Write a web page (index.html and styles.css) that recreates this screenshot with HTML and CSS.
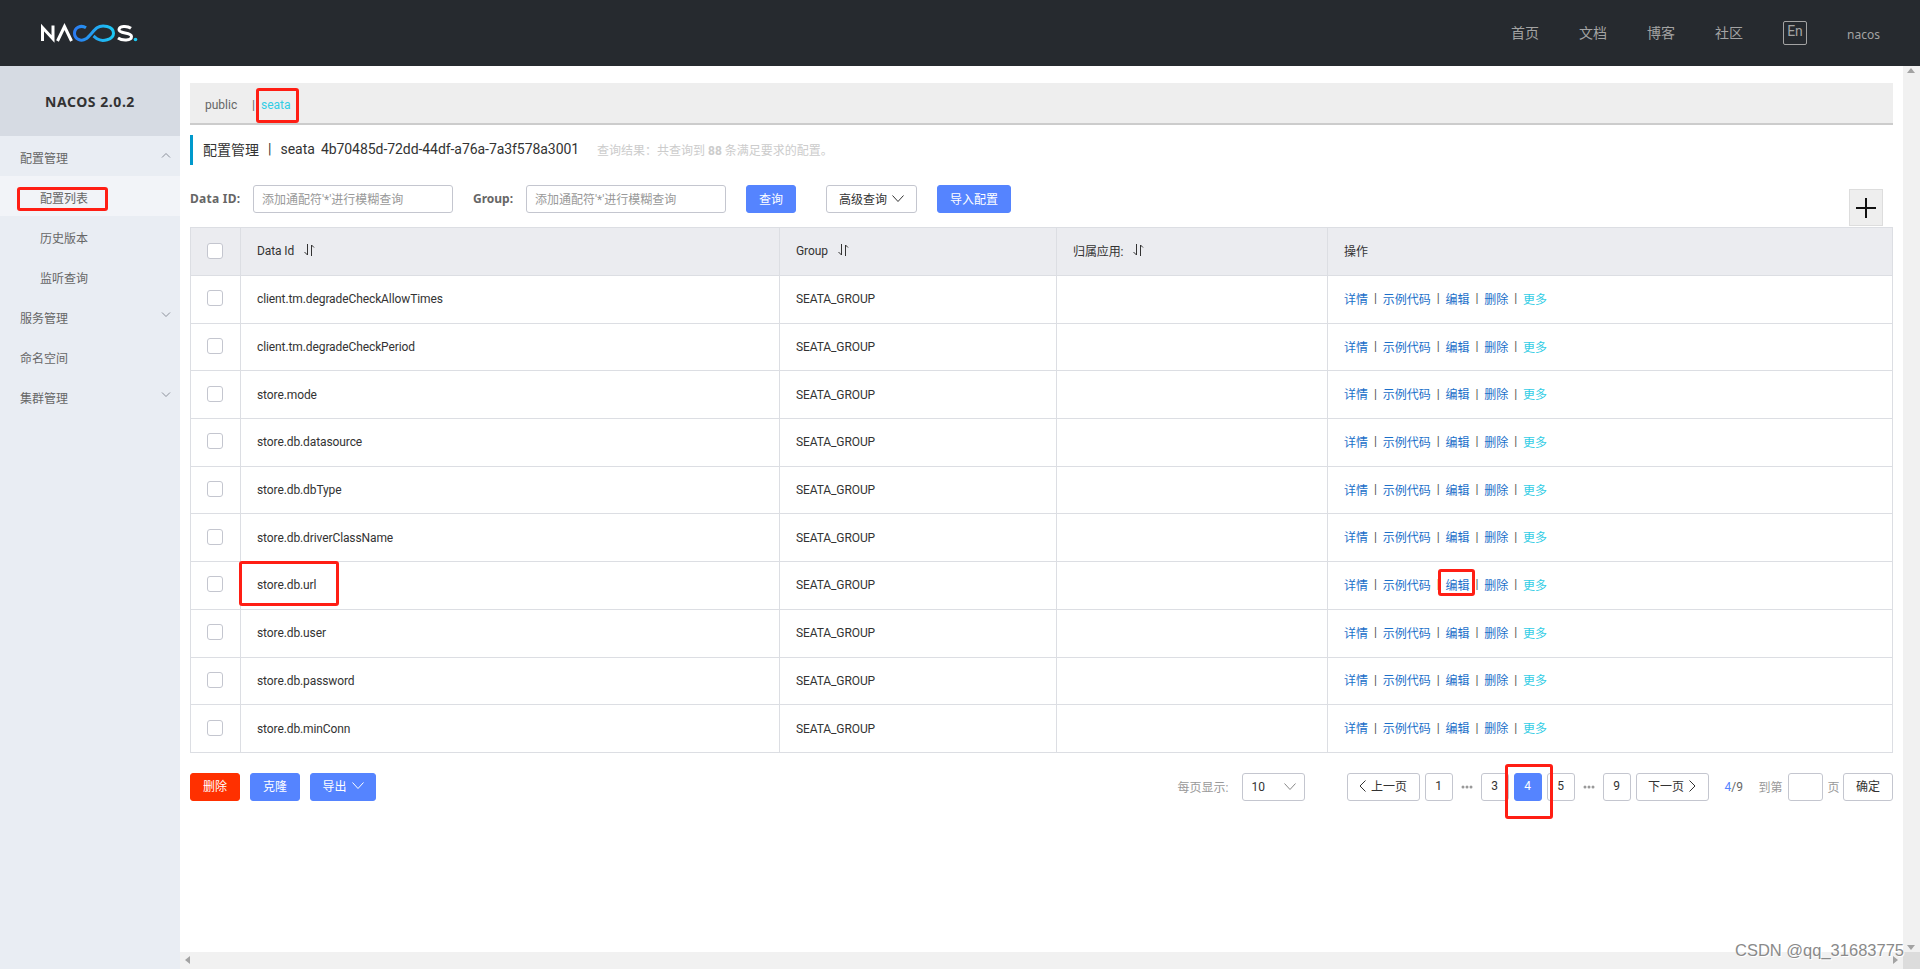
FILE: index.html
```html
<!DOCTYPE html>
<html lang="zh-CN">
<head>
<meta charset="utf-8">
<title>Nacos</title>
<link rel="stylesheet" href="styles.css">
</head>
<body>
<header class="topbar">
  <svg class="logo" viewBox="0 0 100 20" width="100" height="20" role="img" aria-label="NACOS">
    <defs><linearGradient id="lg" x1="0" x2="1" y1="0" y2="0"><stop offset="0" stop-color="#2a7bf0"/><stop offset="1" stop-color="#1cc9f4"/></linearGradient></defs>
    <path d="M3.5 18V4.5L14 16V2.5" fill="none" stroke="#fff" stroke-width="3"/>
    <path d="M18.5 18L25.5 3.5L32.5 18" fill="none" stroke="#fff" stroke-width="3"/>
    <path d="M47 4.8C42 1.5 35.5 4.5 35.5 10.3C35.5 16 42 19 47 15.8C50 14 55 6.8 58 4.8C63 1.5 74.5 3 74.5 10.3C74.5 17 63 19 58 15.8L54.5 13" fill="none" stroke="url(#lg)" stroke-width="3"/>
    <path d="M92 5.2C88 2.5 80 2.8 80 6.8C80 11 92.5 9 92.5 13.5C92.5 18 83 17.8 79 15" fill="none" stroke="#fff" stroke-width="3"/>
    <circle cx="96.5" cy="16.5" r="1.8" fill="#1cc9f4"/>
  </svg>
  <nav class="topnav">
    <a class="topnav-item">首页</a><a class="topnav-item">文档</a><a class="topnav-item">博客</a><a class="topnav-item">社区</a>
    <span class="lang">En</span>
    <span class="user">nacos</span>
  </nav>
</header>
<div class="body-wrap">
  <aside class="sidebar">
    <div class="brand">NACOS 2.0.2</div>
    <div class="menu-item">配置管理<svg class="chev" viewBox="0 0 10 6" width="10" height="6"><path d="M1 5.5L5 1.5L9 5.5"/></svg></div>
    <div class="menu-item sub active">配置列表</div>
    <div class="menu-item sub">历史版本</div>
    <div class="menu-item sub">监听查询</div>
    <div class="menu-item">服务管理<svg class="chev" viewBox="0 0 10 6" width="10" height="6"><path d="M1 .5L5 4.5L9 .5"/></svg></div>
    <div class="menu-item">命名空间</div>
    <div class="menu-item">集群管理<svg class="chev" viewBox="0 0 10 6" width="10" height="6"><path d="M1 .5L5 4.5L9 .5"/></svg></div>
  </aside>
  <div class="main-col">
    <div class="main-row">
      <main class="content">
        <div class="ns-bar"><span class="ns ns-first">public</span><span class="ns-sep">|</span><span class="ns ns-on">seata</span></div>
        <div class="title"><span class="title-main">配置管理</span><span class="title-pipe">|</span><span class="title-main">seata</span><span class="title-id">4b70485d-72dd-44df-a76a-7a3f578a3001</span><span class="title-info">查询结果：共查询到 <b>88</b> 条满足要求的配置。</span></div>
        <div class="filters">
          <label class="f-label f-label-id">Data ID:</label>
          <input class="f-input" placeholder="添加通配符'*'进行模糊查询">
          <label class="f-label f-label-group">Group:</label>
          <input class="f-input" placeholder="添加通配符'*'进行模糊查询">
          <button class="btn primary btn-query">查询</button>
          <button class="btn btn-adv">高级查询<svg class="caret" viewBox="0 0 12 7" width="12" height="7"><path d="M.5 .5L6 6.5L11.5 .5"/></svg></button>
          <button class="btn primary btn-import">导入配置</button>
          <button class="plus" aria-label="新建"><svg viewBox="0 0 20 20" width="20" height="20"><path d="M0 10H20M10 0V20"/></svg></button>
        </div>
        <div class="table">
          <div class="row head">
            <div class="cell check"><span class="box"></span></div>
            <div class="cell">Data Id<svg class="sort" viewBox="0 0 11 12" width="11" height="12"><path d="M3.5 0V11L.5 8M7.5 12V1L10 3.5"/></svg></div>
            <div class="cell">Group<svg class="sort" viewBox="0 0 11 12" width="11" height="12"><path d="M3.5 0V11L.5 8M7.5 12V1L10 3.5"/></svg></div>
            <div class="cell">归属应用:<svg class="sort" viewBox="0 0 11 12" width="11" height="12"><path d="M3.5 0V11L.5 8M7.5 12V1L10 3.5"/></svg></div>
            <div class="cell">操作</div>
          </div>
          <div class="row"><div class="cell check"><span class="box"></span></div><div class="cell">client.tm.degradeCheckAllowTimes</div><div class="cell">SEATA_GROUP</div><div class="cell"></div><div class="cell ops"><a>详情</a><i>|</i><a>示例代码</a><i>|</i><a>编辑</a><i>|</i><a>删除</a><i>|</i><a class="more">更多</a></div></div>
          <div class="row"><div class="cell check"><span class="box"></span></div><div class="cell">client.tm.degradeCheckPeriod</div><div class="cell">SEATA_GROUP</div><div class="cell"></div><div class="cell ops"><a>详情</a><i>|</i><a>示例代码</a><i>|</i><a>编辑</a><i>|</i><a>删除</a><i>|</i><a class="more">更多</a></div></div>
          <div class="row"><div class="cell check"><span class="box"></span></div><div class="cell">store.mode</div><div class="cell">SEATA_GROUP</div><div class="cell"></div><div class="cell ops"><a>详情</a><i>|</i><a>示例代码</a><i>|</i><a>编辑</a><i>|</i><a>删除</a><i>|</i><a class="more">更多</a></div></div>
          <div class="row"><div class="cell check"><span class="box"></span></div><div class="cell">store.db.datasource</div><div class="cell">SEATA_GROUP</div><div class="cell"></div><div class="cell ops"><a>详情</a><i>|</i><a>示例代码</a><i>|</i><a>编辑</a><i>|</i><a>删除</a><i>|</i><a class="more">更多</a></div></div>
          <div class="row"><div class="cell check"><span class="box"></span></div><div class="cell">store.db.dbType</div><div class="cell">SEATA_GROUP</div><div class="cell"></div><div class="cell ops"><a>详情</a><i>|</i><a>示例代码</a><i>|</i><a>编辑</a><i>|</i><a>删除</a><i>|</i><a class="more">更多</a></div></div>
          <div class="row"><div class="cell check"><span class="box"></span></div><div class="cell">store.db.driverClassName</div><div class="cell">SEATA_GROUP</div><div class="cell"></div><div class="cell ops"><a>详情</a><i>|</i><a>示例代码</a><i>|</i><a>编辑</a><i>|</i><a>删除</a><i>|</i><a class="more">更多</a></div></div>
          <div class="row"><div class="cell check"><span class="box"></span></div><div class="cell">store.db.url</div><div class="cell">SEATA_GROUP</div><div class="cell"></div><div class="cell ops"><a>详情</a><i>|</i><a>示例代码</a><i>|</i><a>编辑</a><i>|</i><a>删除</a><i>|</i><a class="more">更多</a></div></div>
          <div class="row"><div class="cell check"><span class="box"></span></div><div class="cell">store.db.user</div><div class="cell">SEATA_GROUP</div><div class="cell"></div><div class="cell ops"><a>详情</a><i>|</i><a>示例代码</a><i>|</i><a>编辑</a><i>|</i><a>删除</a><i>|</i><a class="more">更多</a></div></div>
          <div class="row"><div class="cell check"><span class="box"></span></div><div class="cell">store.db.password</div><div class="cell">SEATA_GROUP</div><div class="cell"></div><div class="cell ops"><a>详情</a><i>|</i><a>示例代码</a><i>|</i><a>编辑</a><i>|</i><a>删除</a><i>|</i><a class="more">更多</a></div></div>
          <div class="row"><div class="cell check"><span class="box"></span></div><div class="cell">store.db.minConn</div><div class="cell">SEATA_GROUP</div><div class="cell"></div><div class="cell ops"><a>详情</a><i>|</i><a>示例代码</a><i>|</i><a>编辑</a><i>|</i><a>删除</a><i>|</i><a class="more">更多</a></div></div>
        </div>
        <div class="footer">
          <button class="btn danger btn-s">删除</button>
          <button class="btn primary btn-s">克隆</button>
          <button class="btn primary btn-export">导出<svg class="caret" viewBox="0 0 12 7" width="12" height="7"><path d="M.5 .5L6 6.5L11.5 .5"/></svg></button>
          <span class="pg-label">每页显示:</span>
          <div class="pg-select">10<svg class="caret" viewBox="0 0 12 7" width="12" height="7"><path d="M.5 .5L6 6.5L11.5 .5"/></svg></div>
          <div class="pager">
            <button class="btn pg-nav"><svg class="pg-arrow" viewBox="0 0 7 12" width="7" height="12"><path d="M6.5 .5L1 6L6.5 11.5"/></svg>上一页</button>
            <button class="btn pg">1</button><svg class="dots" viewBox="0 0 12 4" width="12" height="4"><circle cx="2" cy="2" r="1.5"/><circle cx="6" cy="2" r="1.5"/><circle cx="10" cy="2" r="1.5"/></svg><button class="btn pg">3</button><button class="btn pg primary">4</button><button class="btn pg">5</button><svg class="dots" viewBox="0 0 12 4" width="12" height="4"><circle cx="2" cy="2" r="1.5"/><circle cx="6" cy="2" r="1.5"/><circle cx="10" cy="2" r="1.5"/></svg><button class="btn pg">9</button>
            <button class="btn pg-nav">下一页<svg class="pg-arrow" viewBox="0 0 7 12" width="7" height="12"><path d="M.5 .5L6 6L.5 11.5"/></svg></button>
          </div>
          <span class="pg-count"><em>4</em>/9</span>
          <span class="pg-to">到第</span>
          <input class="pg-input">
          <span class="pg-unit">页</span>
          <button class="btn pg-ok">确定</button>
        </div>
      </main>
      <div class="vbar"><span class="arrow up"></span><span class="arrow down"></span></div>
    </div>
    <div class="hbar"><span class="arrow left"></span><span class="arrow right"></span><span class="corner"></span></div>
  </div>
</div>
<span class="mark mark-seata"></span>
<span class="mark mark-list"></span>
<span class="mark mark-url"></span>
<span class="mark mark-edit"></span>
<span class="mark mark-page"></span>
<span class="watermark">CSDN @qq_31683775</span>
</body>
</html>
```
FILE: styles.css
```css
* { box-sizing: border-box; }
html, body { margin: 0; height: 100%; overflow: hidden; }
body {
  font-family: Roboto, "Noto Sans CJK SC", sans-serif;
  font-size: 12px;
  color: #333;
  background: #fff;
  display: flex;
  flex-direction: column;
  height: 969px;
}
button, input { font-family: inherit; font-size: 12px; }

/* header */
.topbar {
  height: 66px;
  flex: none;
  background: #262a2f;
  display: flex;
  align-items: center;
  padding-left: 39px;
  padding-right: 39px;
  justify-content: space-between;
}
.logo { display: block; margin-top: -1px; }
.topnav { display: flex; align-items: center; color: #a3a3a3; font-size: 14px; }
.topnav-item { width: 28px; margin-right: 40px; white-space: nowrap; line-height: 20px; }
.lang {
  width: 24px; height: 24px; margin-right: 1px;
  border: 1px solid #a3a3a3; border-radius: 2px;
  display: flex; justify-content: center; align-items: flex-start;
  line-height: 19px;
  font-size: 14px;
}
.user { margin-left: 39px; width: 34px; font-size: 12px; margin-top: 2px; font-family: "Noto Sans", sans-serif; }

.body-wrap { flex: 1; display: flex; min-height: 0; }

/* sidebar */
.sidebar { width: 180px; flex: none; background: #e9edf3; color: #666; }
.brand {
  height: 70px; background: #d6dbe3; color: #333;
  font-family: "Noto Sans", sans-serif;
  font-weight: 700; font-size: 14px; letter-spacing: .55px;
  display: flex; align-items: center; justify-content: center;
}
.menu-item {
  height: 40px; padding-left: 20px; padding-top: 3px;
  display: flex; align-items: center; position: relative;
}
.menu-item.sub { padding-left: 40px; }
.menu-item.active { background: #f2f4f8; }
.chev { position: absolute; right: 9px; top: 16px; fill: none; stroke: #8a8f99; stroke-width: 1; }

/* main */
.main-col { flex: 1; min-width: 0; display: flex; flex-direction: column; }
.main-row { flex: 1; min-height: 0; display: flex; }
.content { flex: 1; min-width: 0; padding: 17px 10px 0; }

.ns-bar {
  height: 42px; background: #eee; border-bottom: 2px solid #ccc;
  padding-left: 15px; padding-top: 4px; display: flex; align-items: center; color: #666;
}
.ns-first { width: 32px; }
.ns-sep { margin-left: 15px; margin-right: 6px; }
.ns-on { color: #33cde5; }

.title {
  margin-top: 10px; height: 30px; padding-bottom: 2px;
  border-left: 3px solid #09c;
  padding-left: 10px;
  display: flex; align-items: center;
  font-size: 14px; color: #333; white-space: nowrap;
}
.title-pipe { margin: 0 9px; }
.title-id { margin-left: 6px; letter-spacing: -.06px; }
.title-info { margin-left: 18px; font-size: 12px; color: #ccc; }
.title-info b { font-weight: 700; }

.filters { margin-top: 20px; height: 42px; display: flex; align-items: flex-start; }
.f-label { height: 28px; line-height: 28px; font-family: "Noto Sans", sans-serif; font-weight: 700; color: #666; flex: none; }
.f-label-id { width: 63px; letter-spacing: .25px; }
.f-label-group { width: 53px; margin-left: 20px; }
.f-input {
  width: 200px; height: 28px; flex: none; padding: 2px 8px 0;
  border: 1px solid #c4c6cf; border-radius: 3px; outline: 0; background: #fff;
}
.f-input::placeholder { color: #999; }

.btn {
  height: 28px; flex: none; padding: 0 0 2px;
  border: 1px solid #c4c6cf; border-radius: 3px; background: #fff; color: #333;
  display: inline-flex; align-items: center; justify-content: center;
}
.btn.primary { background: #5584ff; border-color: #5584ff; color: #fff; }
.btn.danger { background: #ff3000; border-color: #ff3000; color: #fff; }
.btn-query { width: 50px; margin-left: 20px; }
.btn-adv { width: 91px; margin-left: 30px; }
.btn-import { width: 74px; margin-left: 20px; }
.caret { fill: none; stroke: currentColor; stroke-width: 1; margin-left: 5px; }
.plus {
  margin-left: auto; margin-right: 10px; margin-top: 4px;
  width: 34px; height: 37px; padding: 0; flex: none;
  background: #eee; border: 1px solid #ddd;
  display: flex; align-items: center; justify-content: center;
}
.plus svg { fill: none; stroke: #111; stroke-width: 2; }

/* table */
.table { border: 1px solid #dcdee3; border-bottom: 0; }
.row {
  display: grid;
  grid-template-columns: 49px 539px 277px 271px 1fr;
  height: 47.7px;
  border-bottom: 1px solid #dcdee3;
}
.row.head { height: 48px; background: #ebecf0; }
.row.head .cell { padding-bottom: 2px; }
.cell {
  display: flex; align-items: center; padding: 0 16px;
  border-left: 1px solid #dcdee3; min-width: 0; white-space: nowrap;
  letter-spacing: -.1px;
}
.cell.check { border-left: 0; padding: 0 2px 2px 0; justify-content: center; }
.box {
  width: 16px; height: 16px; background: #fff;
  border: 1px solid #c4c6cf; border-radius: 3px;
}
.sort { margin-left: 10px; margin-top: -2px; fill: none; stroke: #333; stroke-width: 1; }
.cell.ops { letter-spacing: 0; padding-bottom: 2px; }
.ops a { color: #1a6fc9; }
.ops a.more { color: #33cde5; }
.ops i { font-style: normal; width: 14.75px; text-align: center; color: #555; }

/* footer */
.footer { margin-top: 20px; display: flex; align-items: center; height: 28px; white-space: nowrap; }
.btn-s { width: 50px; margin-right: 10px; }
.btn-export { width: 66px; }
.pg-label { margin-left: auto; color: #999; width: 53px; }
.pg-select {
  width: 63px; height: 28px; margin-left: 11px; padding: 0 8px 0 9px;
  border: 1px solid #c4c6cf; border-radius: 3px;
  display: flex; align-items: center; justify-content: space-between;
}
.pg-select .caret { color: #888; }
.pager { margin-left: 42px; display: flex; gap: 5px; align-items: center; }
.pg { width: 28px; }
.pg-nav { width: 73px; gap: 5px; }
.pg-arrow { fill: none; stroke: #333; stroke-width: 1; }
.dots { width: 18px; flex: none; fill: #999; }
.pg-count { margin-left: 16px; width: 18px; color: #666; }
.pg-count em { font-style: normal; color: #5584ff; }
.pg-to { margin-left: 16px; color: #999; width: 24px; }
.pg-input { margin-left: 5px; width: 35px; height: 28px; border: 1px solid #c4c6cf; border-radius: 3px; outline: 0; background: #fff; }
.pg-unit { margin-left: 5px; color: #999; width: 12px; }
.pg-ok { margin-left: 3.5px; width: 50px; }

/* scrollbars */
.vbar { width: 17px; flex: none; background: #f1f1f1; position: relative; }
.hbar { height: 17px; flex: none; background: #f1f1f1; position: relative; }
.corner { position: absolute; right: 0; top: 0; width: 17px; height: 17px; background: #dcdcdc; }
.arrow { position: absolute; width: 0; height: 0; border: 4px solid transparent; z-index: 1; }
.arrow.up { top: 2px; left: 4px; border-bottom: 5px solid #a3a3a3; border-top: 0; }
.arrow.down { bottom: 2px; left: 4px; border-top: 5px solid #a3a3a3; border-bottom: 0; }
.arrow.left { left: 5px; top: 4px; border-right: 5px solid #a3a3a3; border-left: 0; }
.arrow.right { right: 22px; top: 4px; border-left: 5px solid #a3a3a3; border-right: 0; }

/* annotations drawn on top of the screenshot */
.mark { position: absolute; border: 3px solid #ff1e14; border-radius: 3px; }
.mark-seata { left: 256px; top: 88px; width: 43px; height: 35px; }
.mark-list { left: 17px; top: 187px; width: 91px; height: 24px; }
.mark-url { left: 239px; top: 561px; width: 100px; height: 45px; }
.mark-edit { left: 1438px; top: 569px; width: 37px; height: 27px; }
.mark-page { left: 1505px; top: 764px; width: 48px; height: 55px; }
.watermark {
  position: absolute; left: 1735px; top: 941px;
  font-family: "Liberation Sans", sans-serif; font-size: 16.5px; color: #8a8a8a;
  text-shadow: 1px 1px 0 #fff; white-space: nowrap;
}
```
